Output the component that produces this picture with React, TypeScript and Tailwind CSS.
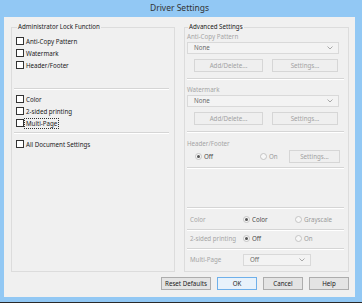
import React from 'react';

function CheckRow({ label, focus = false }: { label: string; focus?: boolean }) {
  return (
    <div className="flex h-[12px] items-center">
      <span className="h-[8px] w-[8px] shrink-0 border border-[#333] bg-white" />
      <span
        className={`ml-[1px] px-[1px] leading-[9px] text-[#1a1a1a] ${
          focus ? 'outline outline-1 outline-dotted outline-[#333]' : ''
        }`}
      >
        {label}
      </span>
    </div>
  );
}

function Radio({ label, checked = false }: { label: string; checked?: boolean }) {
  return (
    <div className="flex items-center gap-[2px]">
      <span className="flex h-[7px] w-[7px] items-center justify-center rounded-full border border-[#c4c4c4] bg-[#f7f7f7]">
        {checked && <span className="h-[3px] w-[3px] rounded-full bg-[#555]" />}
      </span>
      <span className={checked ? 'text-[#4a4a4a]' : 'text-[#9a9a9a]'}>{label}</span>
    </div>
  );
}

function Btn({ label, w, disabled = false, focus = false }: { label: string; w: string; disabled?: boolean; focus?: boolean }) {
  return (
    <div
      className={`flex h-[13px] items-center justify-center border ${w} ${
        disabled
          ? 'border-[#d6d6d6] bg-[#efefef] text-[#a2a2a2]'
          : focus
          ? 'border-[#6fb0ea] bg-[#e8f2fb] text-[#1a1a1a]'
          : 'border-[#adadad] bg-[#e4e4e4] text-[#1a1a1a]'
      }`}
    >
      {label}
    </div>
  );
}

function Select({ value, w }: { value: string; w: string }) {
  return (
    <div className={`flex h-[12px] items-center justify-between border border-[#d9d9d9] bg-[#f3f3f3] pl-[6px] pr-[5px] ${w}`}>
      <span className="text-[#6a6a6a]">{value}</span>
      <svg width="6" height="4" viewBox="0 0 6 4" className="text-[#a8a8a8]">
        <path d="M0.5 0.5 L3 3 L5.5 0.5" fill="none" stroke="currentColor" strokeWidth="1" />
      </svg>
    </div>
  );
}

function Sep({ className = '' }: { className?: string }) {
  return <div className={`h-[2px] border-t border-[#d5d5d5] border-b border-b-white ${className}`} />;
}

export default function App() {
  return (
    <div className="h-[303px] w-[362px] bg-[#2a2a2a] font-['Noto_Sans',sans-serif] text-[6.2px]">
      <div className="flex h-[302px] w-[362px] flex-col bg-[#92c8f4] pl-[4px] pr-[7px] pb-[5px]">
        {/* title bar */}
        <div className="flex h-[17px] items-center justify-center text-[8.5px] text-[#333]">
          Driver Settings
        </div>

        <div className="flex flex-1 flex-col bg-[#f0f0f0] pl-[7px] pr-[6px] pt-[5px]">
          <div className="flex gap-[9px]">
            {/* left group */}
            <fieldset className="h-[250px] w-[165px] border border-[#dcdcdc] pl-[4px]">
              <legend className="ml-[1px] px-[1px] leading-[10px] text-[#1a1a1a]">Administrator Lock Function</legend>
              <div className="pt-[3px]">
                <CheckRow label="Anti-Copy Pattern" />
                <CheckRow label="Watermark" />
                <CheckRow label="Header/Footer" />
              </div>
              <Sep className="ml-[-2px] mr-[5px] mt-[17px]" />
              <div className="pt-[3px]">
                <CheckRow label="Color" />
                <CheckRow label="2-sided printing" />
                <CheckRow label="Multi-Page" focus />
              </div>
              <Sep className="ml-[-2px] mr-[5px] mt-[3px]" />
              <div className="pt-[4px]">
                <CheckRow label="All Document Settings" />
              </div>
            </fieldset>

            {/* right group */}
            <fieldset className="h-[250px] w-[166px] border border-[#dcdcdc] pl-[2px] pr-[6px]">
              <legend className="ml-[1px] px-[1px] leading-[10px] text-[#1a1a1a]">Advanced Settings</legend>

              <div className="flex h-[10px] items-center text-[#a5a5a5]">Anti-Copy Pattern</div>
              <Select value="None" w="w-[152px]" />
              <div className="mt-[5px] flex pl-[7px]">
                <Btn label="Add/Delete..." w="w-[69px]" disabled />
                <div className="ml-[9px]">
                  <Btn label="Settings..." w="w-[66px]" disabled />
                </div>
              </div>
              <Sep className="mr-[-2px] mt-[6px]" />

              <div className="mt-[5px] flex h-[10px] items-center text-[#a5a5a5]">Watermark</div>
              <Select value="None" w="w-[152px]" />
              <div className="mt-[5px] flex pl-[7px]">
                <Btn label="Add/Delete..." w="w-[69px]" disabled />
                <div className="ml-[9px]">
                  <Btn label="Settings..." w="w-[66px]" disabled />
                </div>
              </div>
              <Sep className="mr-[-2px] mt-[6px]" />

              <div className="mt-[6px] flex h-[10px] items-center text-[#a5a5a5]">Header/Footer</div>
              <div className="mt-[1px] flex h-[13px] items-center pl-[8px]">
                <div className="w-[65px]">
                  <Radio label="Off" checked />
                </div>
                <div className="w-[29px]">
                  <Radio label="On" />
                </div>
                <Btn label="Settings..." w="w-[51px]" disabled />
              </div>
              <Sep className="mr-[-2px] mt-[4px]" />

              <Sep className="mr-[-2px] mt-[38px]" />
              <div className="mt-[4px] flex h-[14px] items-center pl-[3px]">
                <span className="w-[53px] text-[#a5a5a5]">Color</span>
                <div className="w-[52px]">
                  <Radio label="Color" checked />
                </div>
                <Radio label="Grayscale" />
              </div>
              <Sep className="mr-[-2px] mt-[2px]" />
              <div className="mt-[1px] flex h-[14px] items-center pl-[3px]">
                <span className="w-[53px] text-[#a5a5a5]">2-sided printing</span>
                <div className="w-[52px]">
                  <Radio label="Off" checked />
                </div>
                <Radio label="On" />
              </div>
              <Sep className="mr-[-2px] mt-[2px]" />
              <div className="mt-[3px] flex h-[14px] items-center pl-[3px]">
                <span className="w-[53px] text-[#a5a5a5]">Multi-Page</span>
                <Select value="Off" w="w-[68px]" />
              </div>
            </fieldset>
          </div>

          {/* dialog buttons */}
          <div className="mt-[5px] flex justify-end gap-[6px]">
            <Btn label="Reset Defaults" w="w-[50px]" />
            <Btn label="OK" w="w-[40px]" focus />
            <Btn label="Cancel" w="w-[40px]" />
            <Btn label="Help" w="w-[40px]" />
          </div>
        </div>
      </div>
    </div>
  );
}
